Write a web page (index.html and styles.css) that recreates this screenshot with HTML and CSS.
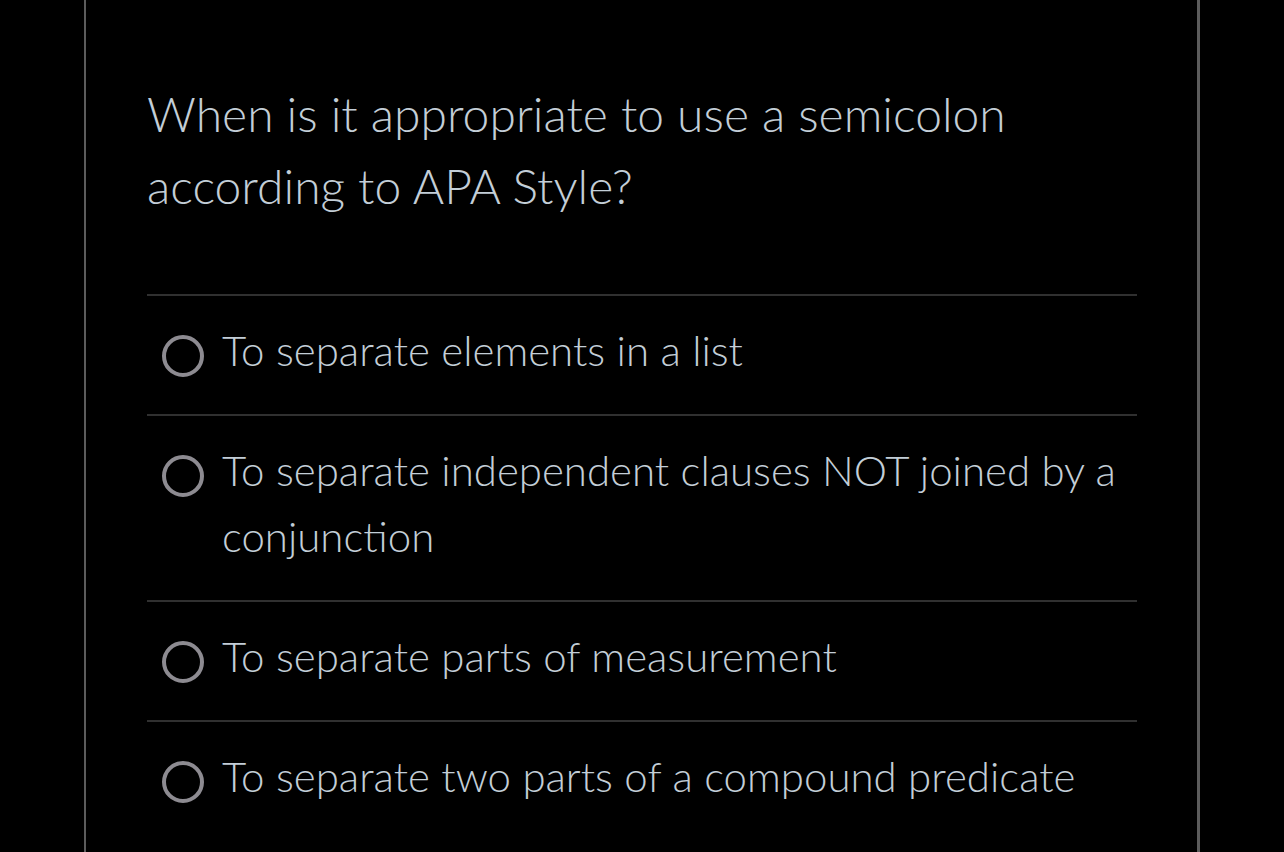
FILE: index.html
```html
<!DOCTYPE html>
<html>
<head>
<meta charset="utf-8">
<link rel="stylesheet" href="styles.css">
</head>
<body>
<div class="panel">
  <div class="question">When is it appropriate to use a semicolon according to APA Style?</div>
  <div class="options">
    <div class="option"><span class="radio"></span><span class="label">To separate elements in a list</span></div>
    <div class="option"><span class="radio"></span><span class="label">To separate independent clauses NOT joined by a conjunction</span></div>
    <div class="option"><span class="radio"></span><span class="label">To separate parts of measurement</span></div>
    <div class="option"><span class="radio"></span><span class="label">To separate two parts of a compound predicate</span></div>
  </div>
</div>
</body>
</html>
```
FILE: styles.css
```css
html, body {
  margin: 0;
  padding: 0;
  background: #000;
  height: 100%;
  overflow: hidden;
}
body {
  font-family: "Lato Light", Lato, "Open Sans", sans-serif;
  font-weight: 300;
  color: #c3ced7;
}
.panel {
  margin-left: 84px;
  width: 1116px;
  height: 100%;
  border-left: 2px solid #5c5c5c;
  border-right: 3px solid #5c5c5c;
  padding: 78px 61px 0 61px;
  box-sizing: border-box;
  overflow: hidden;
}
.question {
  font-size: 48px;
  line-height: 72px;
  width: 920px;
  margin-bottom: 72px;
}
.options {
  width: 990px;
}
.option {
  display: flex;
  align-items: flex-start;
  border-top: 2px solid #303030;
  padding: 21px 0 31px;
}
.radio {
  flex: none;
  width: 34px;
  height: 34px;
  border: 4px solid #8d8b91;
  border-radius: 50%;
  margin: 18px 18px 0 15px;
}
.label {
  font-size: 42px;
  line-height: 66px;
}
```
